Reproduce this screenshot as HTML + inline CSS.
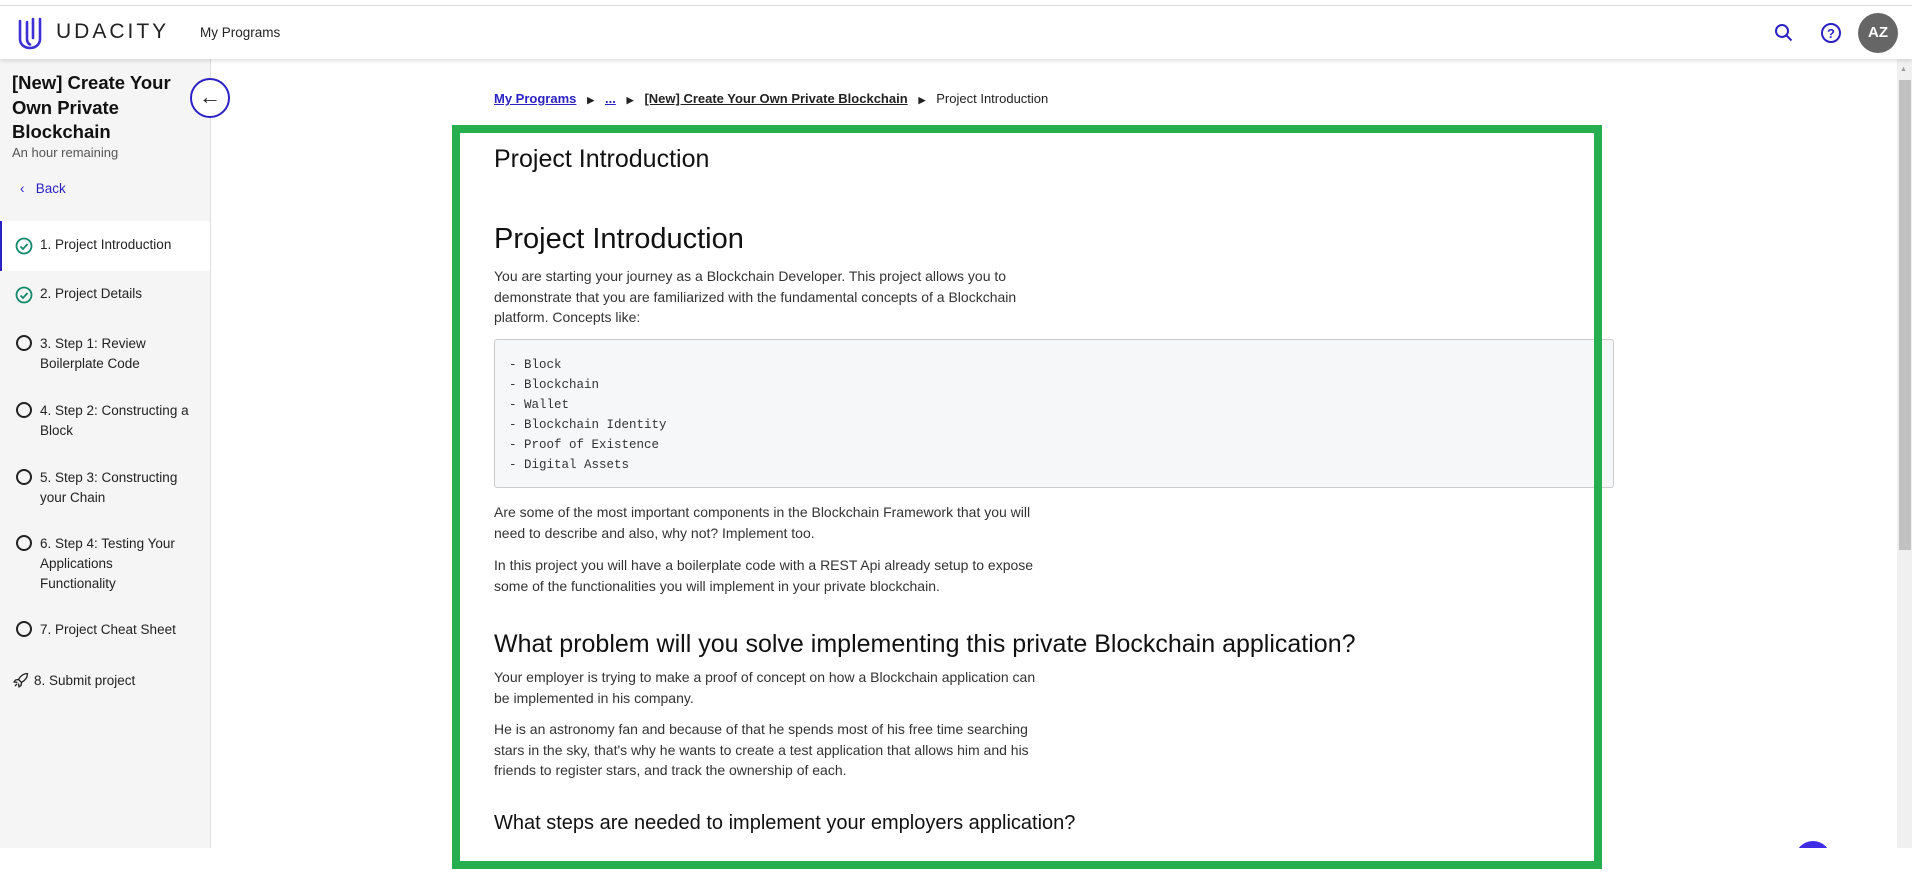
<!DOCTYPE html>
<html><head><meta charset="utf-8"><style>
*{box-sizing:border-box;margin:0;padding:0}
body{width:1912px;height:882px;overflow:hidden;background:#fff;font-family:"Liberation Sans",sans-serif;color:#2b2b2b;position:relative}
.abs{position:absolute;white-space:nowrap}
.hdr{position:absolute;left:0;top:5px;width:1912px;height:54px;border-top:1px solid #ddd;background:#fff;box-shadow:0 2px 4px rgba(0,0,0,.12);z-index:2}
.side{position:absolute;left:0;top:59px;width:211px;height:789px;background:#f5f5f5;border-right:1px solid #ddd}
.item{position:absolute;left:40px;font-size:13.5px;line-height:20px;color:#222}
.ic{position:absolute;left:16px;width:16px;height:16px;border:2px solid #222;border-radius:50%}
.ok{position:absolute;left:15px}
p.t{position:absolute;left:494px;font-size:14px;line-height:20.7px;color:#333;white-space:nowrap}
.code{position:absolute;left:494px;top:339px;width:1120px;height:149px;background:#f6f7f8;border:1px solid #ccc;border-radius:3px;font-family:"Liberation Mono",monospace;font-size:12.5px;line-height:20px;color:#333;padding:15px 14px}
h{position:absolute;left:494px;font-family:"Liberation Sans",sans-serif;color:#111;white-space:nowrap;font-weight:normal}
</style></head><body>
<div class="hdr">
 <svg class="abs" style="left:16px;top:11px" width="28" height="34" viewBox="0 0 28 34"><path d="M4 4v18c0 5 4 9 10 9s10-4 10-9V2M11 5v17c0 3 1.5 5 3 5.5M17 2v19" fill="none" stroke="#3b31d6" stroke-width="2.6" stroke-linecap="round"/></svg>
 <div class="abs" style="left:56px;top:14px;font-size:21px;letter-spacing:3px;color:#222">UDACITY</div>
 <div class="abs" style="left:200px;top:19px;font-size:13.5px;color:#222">My Programs</div>
 <svg class="abs" style="left:1774px;top:17px" width="20" height="20" viewBox="0 0 20 20"><circle cx="8" cy="8" r="6" fill="none" stroke="#2b22c4" stroke-width="2"/><path d="M12.5 12.5l5 5" stroke="#2b22c4" stroke-width="2"/></svg>
 <svg class="abs" style="left:1820px;top:16px" width="22" height="22" viewBox="0 0 22 22"><circle cx="11" cy="11" r="9" fill="none" stroke="#2b22c4" stroke-width="2"/><text x="11" y="16" text-anchor="middle" font-size="13" font-weight="bold" fill="#2b22c4" font-family="Liberation Sans">?</text></svg>
 <div class="abs" style="left:1858px;top:7px;width:40px;height:40px;border-radius:50%;background:#666;color:#fff;font-size:15px;font-weight:bold;text-align:center;line-height:40px">AZ</div>
</div>
<div class="side">
 <div class="abs" style="left:12px;top:12px;font-size:18.5px;font-weight:bold;line-height:24.5px;white-space:normal;width:170px;color:#111">[New] Create Your Own Private Blockchain</div>
 <div class="abs" style="left:12px;top:86px;font-size:13px;color:#555">An hour remaining</div>
 <div class="abs" style="left:20px;top:122px;font-size:13.5px;color:#2b22c4">&#8249;&nbsp;&nbsp;&nbsp;Back</div>
 <div class="abs" style="left:0;top:162px;width:210px;height:50px;background:#fff;border-left:2px solid #2b22c4"></div>
 <svg class="ok" style="top:178px;position:absolute" width="18" height="18" viewBox="0 0 18 18"><circle cx="9" cy="9" r="7.5" fill="none" stroke="#138a6a" stroke-width="1.8"/><path d="M5.5 9.5l2.5 2.5 4.5-5" fill="none" stroke="#138a6a" stroke-width="1.8"/></svg>
 <div class="item" style="top:176px">1. Project Introduction</div>
 <svg class="ok" style="top:227px;position:absolute" width="18" height="18" viewBox="0 0 18 18"><circle cx="9" cy="9" r="7.5" fill="none" stroke="#138a6a" stroke-width="1.8"/><path d="M5.5 9.5l2.5 2.5 4.5-5" fill="none" stroke="#138a6a" stroke-width="1.8"/></svg>
 <div class="item" style="top:225px">2. Project Details</div>
 <div class="ic" style="top:276px"></div><div class="item" style="top:275px">3. Step 1: Review<br>Boilerplate Code</div>
 <div class="ic" style="top:343px"></div><div class="item" style="top:342px">4. Step 2: Constructing a<br>Block</div>
 <div class="ic" style="top:410px"></div><div class="item" style="top:409px">5. Step 3: Constructing<br>your Chain</div>
 <div class="ic" style="top:476px"></div><div class="item" style="top:475px">6. Step 4: Testing Your<br>Applications<br>Functionality</div>
 <div class="ic" style="top:562px"></div><div class="item" style="top:561px">7. Project Cheat Sheet</div>
 <svg class="abs" style="left:13px;top:613px" width="16" height="16" viewBox="0 0 16 16"><path d="M14.5 1.5c-4 0-7 2.5-9 6l3 3c3.5-2 6-5 6-9zM5.5 7.5l-3 .5-1.5 2 3.5.5M8.5 10.5l-.5 3-2 1.5-.5-3.5M4 12l-2 2" fill="none" stroke="#222" stroke-width="1.3" stroke-linejoin="round"/></svg>
 <div class="item" style="top:612px;left:34px">8. Submit project</div>
</div>
<div class="abs" style="left:190px;top:78px;width:40px;height:40px;border:2px solid #2b22c4;border-radius:50%;background:#fff;text-align:center;line-height:34px;font-size:22px;color:#222">&#8592;</div>
<div class="abs" style="left:494px;top:91px;font-size:13px;font-weight:bold;color:#222">
 <span style="color:#2b22c4;text-decoration:underline">My Programs</span>&nbsp;&nbsp;&nbsp;<span style="font-size:9px">&#9654;</span>&nbsp;&nbsp;&nbsp;<span style="color:#2b22c4;text-decoration:underline">...</span>&nbsp;&nbsp;&nbsp;<span style="font-size:9px">&#9654;</span>&nbsp;&nbsp;&nbsp;<span style="text-decoration:underline">[New] Create Your Own Private Blockchain</span>&nbsp;&nbsp;&nbsp;<span style="font-size:9px">&#9654;</span>&nbsp;&nbsp;&nbsp;<span style="font-weight:normal">Project Introduction</span></div>
<h style="top:145px;font-size:25px">Project Introduction</h>
<h style="top:223px;font-size:29px">Project Introduction</h>
<p class="t" style="top:266px">You are starting your journey as a Blockchain Developer. This project allows you to<br>demonstrate that you are familiarized with the fundamental concepts of a Blockchain<br>platform. Concepts like:</p>
<div class="code">- Block<br>- Blockchain<br>- Wallet<br>- Blockchain Identity<br>- Proof of Existence<br>- Digital Assets</div>
<p class="t" style="top:502px">Are some of the most important components in the Blockchain Framework that you will<br>need to describe and also, why not? Implement too.</p>
<p class="t" style="top:555px">In this project you will have a boilerplate code with a REST Api already setup to expose<br>some of the functionalities you will implement in your private blockchain.</p>
<h style="top:630px;font-size:25px">What problem will you solve implementing this private Blockchain application?</h>
<p class="t" style="top:667px">Your employer is trying to make a proof of concept on how a Blockchain application can<br>be implemented in his company.</p>
<p class="t" style="top:719px">He is an astronomy fan and because of that he spends most of his free time searching<br>stars in the sky, that's why he wants to create a test application that allows him and his<br>friends to register stars, and track the ownership of each.</p>
<h style="top:812px;font-size:20px">What steps are needed to implement your employers application?</h>
<div class="abs" style="left:1795px;top:841px;width:36px;height:36px;border-radius:50%;background:#3f2de8"></div>
<div class="abs" style="left:0;top:848px;width:1912px;height:34px;background:#fff"></div>
<div class="abs" style="left:1897px;top:59px;width:15px;height:789px;background:#f0f0f0"></div>
<div class="abs" style="left:1899px;top:80px;width:12px;height:470px;background:#c1c1c1"></div>
<div class="abs" style="left:1900px;top:66px;font-size:7px;color:#999">&#9650;</div>
<div class="abs" style="left:452px;top:125px;width:1150px;height:744px;border:8px solid #27ae4f"></div>
</body></html>
